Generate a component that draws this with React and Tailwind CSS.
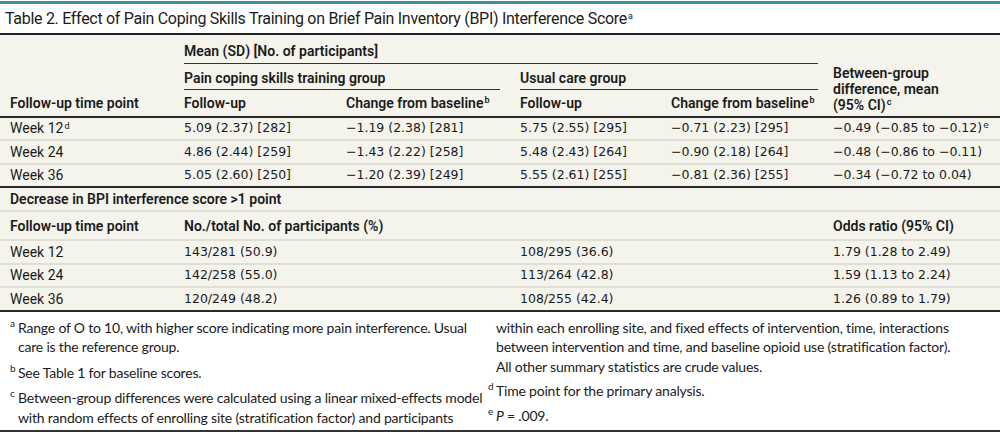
import React from "react";

const cols = "grid grid-cols-[184px_162px_174px_151px_162px_1fr]";
const tableFont = { fontFamily: "Roboto, 'Liberation Sans', sans-serif" };
const dataFont = { fontFamily: "'DejaVu Sans', 'Liberation Sans', sans-serif" };
const noteFont = { fontFamily: "Lato, 'Liberation Sans', sans-serif" };

const Sup = ({ children }) => (
  <sup className="text-[9px] ml-[1px]">{children}</sup>
);

const meanRows = [
  { week: "Week 12", sup: "d", a: "5.09 (2.37) [282]", b: "−1.19 (2.38) [281]", c: "5.75 (2.55) [295]", d: "−0.71 (2.23) [295]", e: "−0.49 (−0.85 to −0.12)", eSup: "e" },
  { week: "Week 24", a: "4.86 (2.44) [259]", b: "−1.43 (2.22) [258]", c: "5.48 (2.43) [264]", d: "−0.90 (2.18) [264]", e: "−0.48 (−0.86 to −0.11)" },
  { week: "Week 36", a: "5.05 (2.60) [250]", b: "−1.20 (2.39) [249]", c: "5.55 (2.61) [255]", d: "−0.81 (2.36) [255]", e: "−0.34 (−0.72 to 0.04)" },
];

const decreaseRows = [
  { week: "Week 12", a: "143/281 (50.9)", c: "108/295 (36.6)", e: "1.79 (1.28 to 2.49)" },
  { week: "Week 24", a: "142/258 (55.0)", c: "113/264 (42.8)", e: "1.59 (1.13 to 2.24)" },
  { week: "Week 36", a: "120/249 (48.2)", c: "108/255 (42.4)", e: "1.26 (0.89 to 1.79)" },
];

const Note = ({ mark, children }) => (
  <div className="relative pl-[8px]">
    <span className="absolute left-0 top-[-4px] text-[10px]">{mark}</span>
    {children}
  </div>
);

export default function App() {
  return (
    <div className="w-[1000px] h-[444px] bg-white text-[#1b1b1b] pt-[1px]">
      <div className="h-[3px] bg-[#3d8fa6]" />
      <div className="h-[29px] flex items-center pl-[5px] text-[16px] tracking-[-0.3px]" style={tableFont}>
        <span>
          Table 2. Effect of Pain Coping Skills Training on Brief Pain Inventory (BPI) Interference Score
          <Sup>a</Sup>
        </span>
      </div>
      <div className="h-[1.5px] bg-[#222]" />

      <div className="bg-[#f4f3ec] text-[14px] leading-5" style={tableFont}>
        {/* header */}
        <div className={`${cols} grid-rows-[29px_26px_26px] font-semibold border-b-2 border-[#2a2a2a]`}>
          <div className="col-start-1 row-start-3 flex items-end pb-[3px] pl-[10px]">Follow-up time point</div>
          <div className="col-start-2 col-span-4 row-start-1 pr-[15px]">
            <div className="h-full flex items-end border-b border-[#333] pb-[2px]">Mean (SD) [No. of participants]</div>
          </div>
          <div className="col-start-2 col-span-2 row-start-2 pr-[20px]">
            <div className="h-full flex items-end border-b border-[#333] pb-[1px]">Pain coping skills training group</div>
          </div>
          <div className="col-start-4 col-span-2 row-start-2 pr-[15px]">
            <div className="h-full flex items-end border-b border-[#333] pb-[1px]">Usual care group</div>
          </div>
          <div className="col-start-2 row-start-3 flex items-end pb-[3px]">Follow-up</div>
          <div className="col-start-3 row-start-3 flex items-end pb-[3px]">
            <span>Change from baseline<Sup>b</Sup></span>
          </div>
          <div className="col-start-4 row-start-3 flex items-end pb-[3px]">Follow-up</div>
          <div className="col-start-5 row-start-3 flex items-end pb-[3px]">
            <span>Change from baseline<Sup>b</Sup></span>
          </div>
          <div className="col-start-6 row-start-2 row-span-2 flex items-end pb-[3px] leading-4">
            <span>
              Between-group
              <br />
              difference, mean
              <br />
              (95% CI)<Sup>c</Sup>
            </span>
          </div>
        </div>

        {/* mean rows */}
        {meanRows.map((r, i) => (
          <div
            key={r.week}
            style={dataFont}
            className={`${cols} h-[23.5px] items-center text-[12.5px] ${i < meanRows.length - 1 ? "border-b-2 border-[#e0dfd6]" : "border-b-2 border-[#2a2a2a]"}`}
          >
            <div className="pl-[10px] text-[14px]" style={tableFont}>
              {r.week}
              {r.sup && <Sup>{r.sup}</Sup>}
            </div>
            <div>{r.a}</div>
            <div>{r.b}</div>
            <div>{r.c}</div>
            <div>{r.d}</div>
            <div>
              {r.e}
              {r.eSup && <Sup>{r.eSup}</Sup>}
            </div>
          </div>
        ))}

        {/* decrease section */}
        <div className="h-[24px] flex items-center pl-[10px] font-semibold border-b-2 border-[#e0dfd6]">
          Decrease in BPI interference score &gt;1 point
        </div>
        <div className={`${cols} h-[29px] items-center font-semibold border-b-2 border-[#e0dfd6]`}>
          <div className="pl-[10px]">Follow-up time point</div>
          <div className="col-span-4">No./total No. of participants (%)</div>
          <div>Odds ratio (95% CI)</div>
        </div>
        {decreaseRows.map((r, i) => (
          <div
            key={r.week}
            style={dataFont}
            className={`${cols} h-[23.5px] items-center text-[12.5px] ${i < decreaseRows.length - 1 ? "border-b-2 border-[#e0dfd6]" : "border-b-2 border-[#2a2a2a]"}`}
          >
            <div className="pl-[10px] text-[14px]" style={tableFont}>{r.week}</div>
            <div className="col-span-2">{r.a}</div>
            <div className="col-span-2">{r.c}</div>
            <div>{r.e}</div>
          </div>
        ))}
      </div>

      {/* footnotes */}
      <div className="grid grid-cols-[478px_1fr] pl-[10px] pt-[6px] pb-[3px] text-[14px] leading-[19.5px] tracking-[-0.2px] border-b-2 border-[#333]" style={noteFont}>
        <div className="flex flex-col gap-[6px]">
          <Note mark="a">
            Range of O to 10, with higher score indicating more pain interference. Usual
            <br />
            care is the reference group.
          </Note>
          <Note mark="b">See Table 1 for baseline scores.</Note>
          <Note mark="c">
            Between-group differences were calculated using a linear mixed-effects model
            <br />
            with random effects of enrolling site (stratification factor) and participants
          </Note>
        </div>
        <div className="flex flex-col gap-[5px]">
          <div className="pl-[8px]">
            within each enrolling site, and fixed effects of intervention, time, interactions
            <br />
            between intervention and time, and baseline opioid use (stratification factor).
            <br />
            All other summary statistics are crude values.
          </div>
          <Note mark="d">Time point for the primary analysis.</Note>
          <Note mark="e">
            <i>P</i> = .009.
          </Note>
        </div>
      </div>
    </div>
  );
}
